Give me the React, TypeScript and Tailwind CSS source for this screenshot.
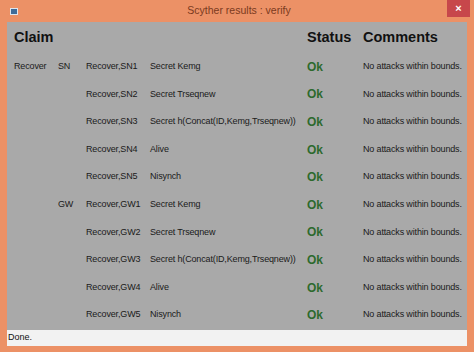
const rows = [
  { a: 'Recover', b: 'SN', c: 'Recover,SN1', d: 'Secret Kemg' },
  { a: '', b: '', c: 'Recover,SN2', d: 'Secret Trseqnew' },
  { a: '', b: '', c: 'Recover,SN3', d: 'Secret h(Concat(ID,Kemg,Trseqnew))' },
  { a: '', b: '', c: 'Recover,SN4', d: 'Alive' },
  { a: '', b: '', c: 'Recover,SN5', d: 'Nisynch' },
  { a: '', b: 'GW', c: 'Recover,GW1', d: 'Secret Kemg' },
  { a: '', b: '', c: 'Recover,GW2', d: 'Secret Trseqnew' },
  { a: '', b: '', c: 'Recover,GW3', d: 'Secret h(Concat(ID,Kemg,Trseqnew))' },
  { a: '', b: '', c: 'Recover,GW4', d: 'Alive' },
  { a: '', b: '', c: 'Recover,GW5', d: 'Nisynch' },
];

const App = () => {
  return (
    <div className="flex h-[352px] w-[474px] flex-col bg-[#ec9166] font-['Liberation_Sans',sans-serif]">
      {/* title bar */}
      <div className="relative flex h-[22px] shrink-0 items-center justify-center">
        <div className="absolute left-[10px] top-[8px] h-[7px] w-[8px] border border-[#dfe6ee] bg-[#3f6c99]" />
        <span className="pl-[4px] text-[10.5px] text-[#7a3a1e]">Scyther results : verify</span>
        <div className="absolute right-[4px] top-0 flex h-[17px] w-[23px] items-center justify-center bg-[#c7474b] text-[11px] font-bold text-white">
          ×
        </div>
      </div>
      <div className="mx-[7px] flex flex-1 flex-col">
        <div className="flex-1 bg-[#a9a9a9] pt-[7px]">
          <div className="flex h-[18px] items-center whitespace-nowrap text-[14.5px] font-bold text-[#111]">
            <span className="ml-[7px] w-[293px] shrink-0">Claim</span>
            <span className="w-[56px] shrink-0">Status</span>
            <span>Comments</span>
          </div>
          <div className="mt-[6px] flex flex-col">
            {rows.map((r, i) => (
              <div
                key={i}
                className="flex h-[27.6px] items-center whitespace-nowrap text-[9px] tracking-[-0.15px] text-[#1a1a1a]"
              >
                <span className="ml-[7px] w-[44px] shrink-0">{r.a}</span>
                <span className="w-[28px] shrink-0">{r.b}</span>
                <span className="w-[64px] shrink-0">{r.c}</span>
                <span className="w-[157px] shrink-0">{r.d}</span>
                <span className="w-[56px] shrink-0 text-[12px] font-bold tracking-normal text-[#2d6a2d]">Ok</span>
                <span>No attacks within bounds.</span>
              </div>
            ))}
          </div>
        </div>
        <div className="flex h-[16px] items-center bg-[#f2f2f2] pl-[1px] text-[9px] text-[#111]">Done.</div>
        <div className="h-[6px]" />
      </div>
    </div>
  );
};

export default App;
